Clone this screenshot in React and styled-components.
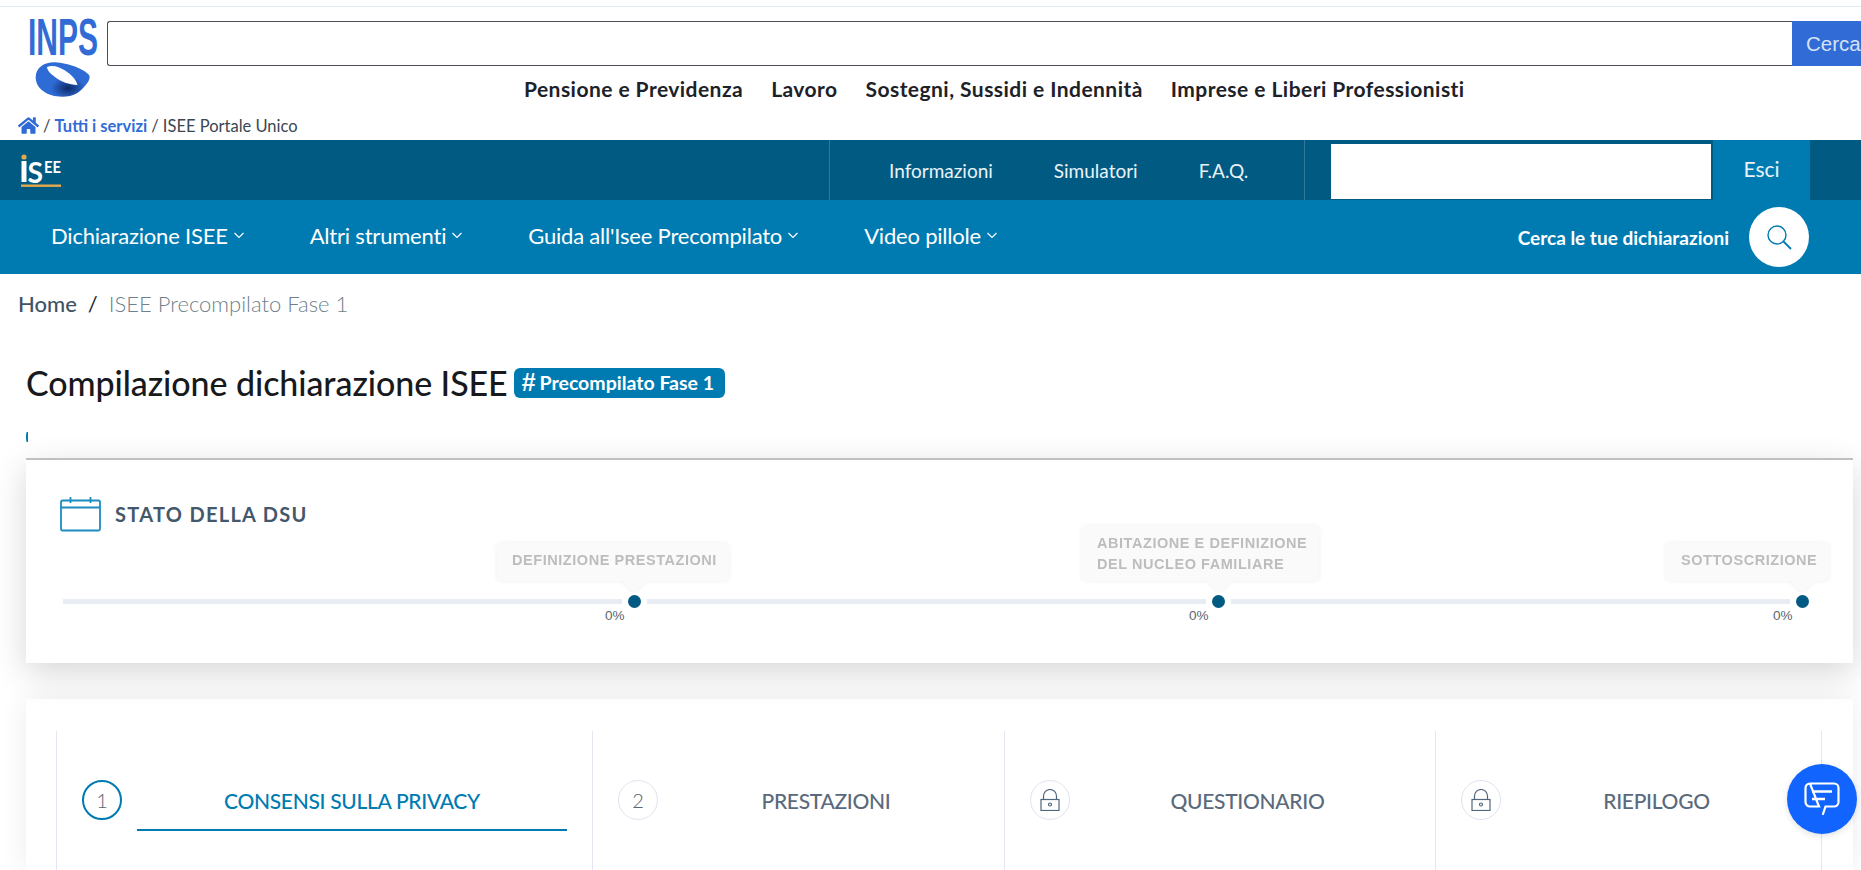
import React from "react";
import styled, { createGlobalStyle } from "styled-components";
import { FaHome } from "react-icons/fa";

const Global = createGlobalStyle`
  html, body { margin: 0; padding: 0; background: #fff; }
  body { font-family: "Lato", "Noto Sans", sans-serif; overflow: hidden; }
  * { box-sizing: border-box; }
`;
const Page = styled.div`width: 1861px; height: 870px; overflow: hidden; position: relative; background: #fff;`;
const TopRule = styled.div`height: 7px; border-bottom: 1px solid #e1ebf6;`;
const Masthead = styled.header`display: flex; height: 108px;`;
const LogoCell = styled.div`width: 107px; flex: none; padding: 10px 0 0 28px;`;
const MastBody = styled.div`flex: 1; padding-top: 14px; min-width: 0;`;
const SearchRow = styled.div`display: flex; height: 45px;`;
const SearchInput = styled.div`flex: 1; border: 1px solid #4a4f55; border-right: 0; border-radius: 3px 0 0 3px;`;
const SearchBtn = styled.div`
  width: 69px; background: #316cd6; color: #d6e2f7; padding-left: 14px; overflow: hidden;
  font: 20.5px/45px "Liberation Sans", sans-serif;
`;
const MainLinks = styled.nav`
  display: flex; gap: 28px; padding: 10px 0 0 417px;
  font-weight: 700; font-size: 21px; letter-spacing: .45px; line-height: 26px; color: #1d2228; white-space: nowrap;
`;
const Trail = styled.div`
  height: 25px; padding: 0 0 4px 18px; display: flex; align-items: center; gap: 4px;
  font-size: 16.500px; color: #3c4650; svg { color: #316cd6; font-size: 21px; }
`;
const TrailLink = styled.span`color: #316cd6; font-weight: 700;`;
const DarkBar = styled.div`height: 60px; background: #005a82; display: flex; color: #eaf3f8;`;
const IseeCell = styled.div`width: 829px; flex: none; padding: 14px 0 0 21px;`;
const ToolLinks = styled.nav`
  width: 476px; flex: none; border-left: 1px solid #33789a; border-right: 1px solid #33789a;
  display: flex; align-items: center; gap: 61px; padding-left: 59px; font-size: 19px;
`;
const UserBox = styled.div`width: 380px; height: 55px; margin: 4px 0 0 26px; background: #fff;`;
const Esci = styled.div`
  width: 97px; margin-left: 2px; background: #007bb2; text-align: center;
  font-size: 21px; line-height: 58px;
`;
const BlueBar = styled.nav`
  height: 74px; background: #007bb2; color: #fff; display: flex; align-items: center;
  padding: 0 52px 0 51px;
`;
const MenuItem = styled.div`
  display: flex; align-items: center; gap: 6px; margin: -4px 66px 0 0;
  font-size: 22px; letter-spacing: -.2px; white-space: nowrap;
`;
const FindLabel = styled.div`margin-left: auto; font-weight: 700; font-size: 19px; margin-right: 20px;`;
const FindBtn = styled.div`
  width: 60px; height: 60px; border-radius: 50%; background: #fff; color: #007bb2;
  display: flex; align-items: center; justify-content: center;
`;
const Crumbs = styled.div`
  height: 58px; padding: 0 0 0 18px; display: flex; align-items: center; gap: 11px; font-size: 22px;
`;
const CrumbHome = styled.span`color: #3f5365; font-weight: 500;`;
const CrumbSep = styled.span`color: #1f2a33;`;
const CrumbNow = styled.span`color: #6f7f8c; font-weight: 300;`;
const Main = styled.main`padding: 0 8px 0 26px;`;
const TitleRow = styled.div`display: flex; align-items: center; gap: 6px; padding-top: 21px; height: 80px;`;
const Title = styled.h1`margin: 0; font-size: 34px; font-weight: 500; letter-spacing: -.08px; color: #17191c; white-space: nowrap;`;
const Badge = styled.span`
  display: flex; align-items: center; gap: 4px; height: 30px; width: 211px; padding-left: 8px;
  background: #007bb2; color: #fff; border-radius: 6px; font-weight: 700; font-size: 19.500px; white-space: nowrap;
`;
const Hash = styled.span`font-size: 25px; font-family: "Liberation Sans", sans-serif;`;
const SpinnerGap = styled.div`height: 46px; padding-top: 20px;`;
const SpinnerSliver = styled.div`width: 2px; height: 10px; border-left: 2px solid #007bb2; border-radius: 50% 0 0 50%;`;
const StateCard = styled.section`
  position: relative; height: 205px; background: #fff; border-top: 2px solid #c0c0c0;
  box-shadow: 0 10px 32px rgba(0,0,0,.16); padding: 36px 0 0 34px;
`;
const StateHead = styled.div`display: flex; align-items: center; gap: 14px; height: 36px;`;
const StateTitle = styled.h2`
  margin: 0; font-size: 20px; font-weight: 700; color: #44586c; letter-spacing: 1.3px; white-space: nowrap;
`;
const Progress = styled.div`position: absolute; left: 37px; top: 139px; width: 1750px; height: 5px; display: flex;`;
const Track = styled.div`height: 5px; background: #e8ecf3; flex: none; width: ${p => p.$w}px; margin-right: ${p => p.$gap}px;`;
const Dot = styled.span`
  position: absolute; top: -4px; left: ${p => p.$x}px; width: 13px; height: 13px; border-radius: 50%; background: #005a82;
`;
const Pct = styled.span`
  position: absolute; top: 10px; left: ${p => p.$x}px; font: 300 13.500px/14px "Liberation Sans", sans-serif; color: #5a6570;
`;
const Tip = styled.div`
  position: absolute; left: ${p => p.$x}px; bottom: 23px; min-height: 38px; background: #fafafa; border-radius: 5px;
  filter: drop-shadow(0 0 2px rgba(0,0,0,.07)); padding: 7px 12px 6px 15px; white-space: nowrap;
  font: 700 14.500px/21px "Liberation Sans", sans-serif; letter-spacing: .55px; color: #bdbdbd;
  &::after {
    content: ""; position: absolute; top: 100%; left: ${p => p.$arrow}px;
    border: 12px solid transparent; border-top-color: #fafafa; border-bottom: 0;
  }
`;
const StepsCard = styled.section`
  margin-top: 36px; height: 171px; background: #fff; box-shadow: 0 0 26px rgba(0,0,0,.08); padding: 32px 31px 0 30px;
`;
const Steps = styled.div`display: flex; height: 139px; border-right: 1px solid #e3e6f0;`;
const Step = styled.div`
  width: ${p => p.$w}px; flex: none; border-left: 1px solid #e3e6f0; display: flex; align-items: flex-start;
  padding: 49px 25px 0 25px;
`;
const StepNum = styled.div`
  width: 40px; height: 40px; flex: none; border-radius: 50%; display: flex; align-items: center; justify-content: center;
  border: ${p => (p.$on ? "2px solid #007bb2" : "1px solid #e0e3f1")};
  font-size: 20px; font-weight: 300; color: #5a6570;
`;
const StepLabel = styled.div`
  flex: 1; margin-left: 15px; height: 51px; text-align: center; font-size: 21px; letter-spacing: -.3px; line-height: 41px; white-space: nowrap;
  color: ${p => (p.$on ? "#007bb2" : "#5a6a7c")}; font-weight: 500;
  border-bottom: ${p => (p.$on ? "2px solid #007bb2" : "0")};
`;
const Fab = styled.div`
  position: absolute; left: 1787px; top: 764px; width: 70px; height: 70px; border-radius: 50%; background: #1264ff;
  display: flex; align-items: center; justify-content: center; box-shadow: 0 2px 6px rgba(0,0,0,.12);
`;

const InpsLogo = () => (
  <svg width="74" height="90" viewBox="0 0 74 90">
    <defs>
      <radialGradient id="blobShade" cx="0.6" cy="0.75" r="0.32">
        <stop offset="0" stopColor="#0b2a66" />
        <stop offset="1" stopColor="#2f6bd4" />
      </radialGradient>
    </defs>
    <text transform="scale(.577 1)" x="0" y="38" fontFamily="Liberation Sans" fontWeight="700" fontSize="52" fill="#316cd6">INPS</text>
    <path d="M7.700 60C8 50 17 45 27 45.300C40 46 56 52 61 58C63 61 60 66 56 70C52 75 46 79.700 34 79.700C20 79.700 7.500 72 7.700 60z" fill="url(#blobShade)" />
    <path d="M19 50C24 47.500 31 49.500 37 53.500C43 57.500 48 62 49.500 68C41 67.500 33 65 27 60C23 57 19 53.500 19 50z" fill="#fff" />
  </svg>
);
const IseeLogo = () => (
  <svg width="42" height="34" viewBox="0 0 42 34">
    <circle cx="3" cy="3" r="2.600" fill="#e5a94b" />
    <rect x="0.500" y="7" width="5" height="21" fill="#fff" />
    <text x="6.500" y="29" fontFamily="Lato" fontWeight="700" fontSize="28" fill="#fff" textLength="15.500" lengthAdjust="spacingAndGlyphs">S</text>
    <text x="23" y="19" fontFamily="Lato" fontWeight="700" fontSize="17" fill="#fff" textLength="17" lengthAdjust="spacingAndGlyphs">EE</text>
    <rect x="0" y="30.500" width="40" height="2.400" fill="#e5a94b" />
  </svg>
);
const Chevron = () => (
  <svg width="10" height="7" viewBox="0 0 10 7" fill="none" stroke="currentColor" strokeWidth="1.100"><path d="M.5 1l4.500 4.500L9.500 1" /></svg>
);
const SearchIcon = () => (
  <svg width="26" height="26" viewBox="0 0 26 26" fill="none" stroke="currentColor" strokeWidth="1.400">
    <circle cx="11" cy="11" r="9" /><path d="M17.500 17.500L25 25" strokeWidth="1.800" />
  </svg>
);
const CalendarIcon = () => (
  <svg width="41" height="36" viewBox="0 0 41 36" fill="none" stroke="#1a8cc0" strokeWidth="1.800">
    <rect x="1" y="4.500" width="39" height="30" rx="1.500" />
    <path d="M1 11.500h39M10.500 1v6M30.500 1v6" />
  </svg>
);
const LockIcon = () => (
  <svg width="20" height="22" viewBox="0 0 20 22" fill="none" stroke="#50667c" strokeWidth="1.200">
    <rect x="1" y="10.500" width="18" height="11" />
    <path d="M3.500 10.500V7a6.500 6.500 0 0 1 13 0v3.500" />
    <circle cx="10" cy="15.500" r="1.500" />
  </svg>
);
const ChatIcon = () => (
  <svg width="36" height="34" viewBox="0 0 36 34" fill="none" stroke="#fff" strokeWidth="2.200" strokeLinecap="round">
    <path d="M6 1.500h24a4.500 4.500 0 0 1 4.500 4.500v14a4.500 4.500 0 0 1-4.500 4.500H21.500L19 32M15 24.500H6A4.500 4.500 0 0 1 1.500 20V6A4.500 4.500 0 0 1 6 1.500z" />
    <path d="M8 9.500h20M8 17h13" strokeLinecap="butt" strokeWidth="2.400" />
  </svg>
);

const menu = ["Dichiarazione ISEE", "Altri strumenti", "Guida all'Isee Precompilato", "Video pillole"];

export default function App() {
  return (
    <Page>
      <Global />
      <TopRule />
      <Masthead>
        <LogoCell><InpsLogo /></LogoCell>
        <MastBody>
          <SearchRow><SearchInput /><SearchBtn>Cerca</SearchBtn></SearchRow>
          <MainLinks>
            <span>Pensione e Previdenza</span>
            <span>Lavoro</span>
            <span>Sostegni, Sussidi e Indennità</span>
            <span>Imprese e Liberi Professionisti</span>
          </MainLinks>
        </MastBody>
      </Masthead>
      <Trail>
        <FaHome />
        <span>/</span><TrailLink>Tutti i servizi</TrailLink><span>/ ISEE Portale Unico</span>
      </Trail>
      <DarkBar>
        <IseeCell><IseeLogo /></IseeCell>
        <ToolLinks><span>Informazioni</span><span>Simulatori</span><span>F.A.Q.</span></ToolLinks>
        <UserBox />
        <Esci>Esci</Esci>
      </DarkBar>
      <BlueBar>
        {menu.map(m => <MenuItem key={m}>{m}<Chevron /></MenuItem>)}
        <FindLabel>Cerca le tue dichiarazioni</FindLabel>
        <FindBtn><SearchIcon /></FindBtn>
      </BlueBar>
      <Crumbs>
        <CrumbHome>Home</CrumbHome><CrumbSep>/</CrumbSep><CrumbNow>ISEE Precompilato Fase 1</CrumbNow>
      </Crumbs>
      <Main>
        <TitleRow>
          <Title>Compilazione dichiarazione ISEE</Title>
          <Badge><Hash>#</Hash>Precompilato Fase 1</Badge>
        </TitleRow>
        <SpinnerGap><SpinnerSliver /></SpinnerGap>
        <StateCard>
          <StateHead><CalendarIcon /><StateTitle>STATO DELLA DSU</StateTitle></StateHead>
          <Progress>
            <Track $w={559} $gap={25} /><Track $w={559} $gap={25} /><Track $w={559} $gap={0} />
            <Tip $x={434} $arrow={125}>DEFINIZIONE PRESTAZIONI</Tip>
            <Tip $x={1019} $arrow={125}>ABITAZIONE E DEFINIZIONE<br />DEL NUCLEO FAMILIARE</Tip>
            <Tip $x={1603} $arrow={124}>SOTTOSCRIZIONE</Tip>
            <Dot $x={565} /><Dot $x={1149} /><Dot $x={1733} />
            <Pct $x={542}>0%</Pct><Pct $x={1126}>0%</Pct><Pct $x={1710}>0%</Pct>
          </Progress>
        </StateCard>
        <StepsCard>
          <Steps>
            <Step $w={536}><StepNum $on>1</StepNum><StepLabel $on>CONSENSI SULLA PRIVACY</StepLabel></Step>
            <Step $w={412}><StepNum>2</StepNum><StepLabel>PRESTAZIONI</StepLabel></Step>
            <Step $w={431}><StepNum><LockIcon /></StepNum><StepLabel>QUESTIONARIO</StepLabel></Step>
            <Step $w={387}><StepNum><LockIcon /></StepNum><StepLabel>RIEPILOGO</StepLabel></Step>
          </Steps>
        </StepsCard>
      </Main>
      <Fab><ChatIcon /></Fab>
    </Page>
  );
}
